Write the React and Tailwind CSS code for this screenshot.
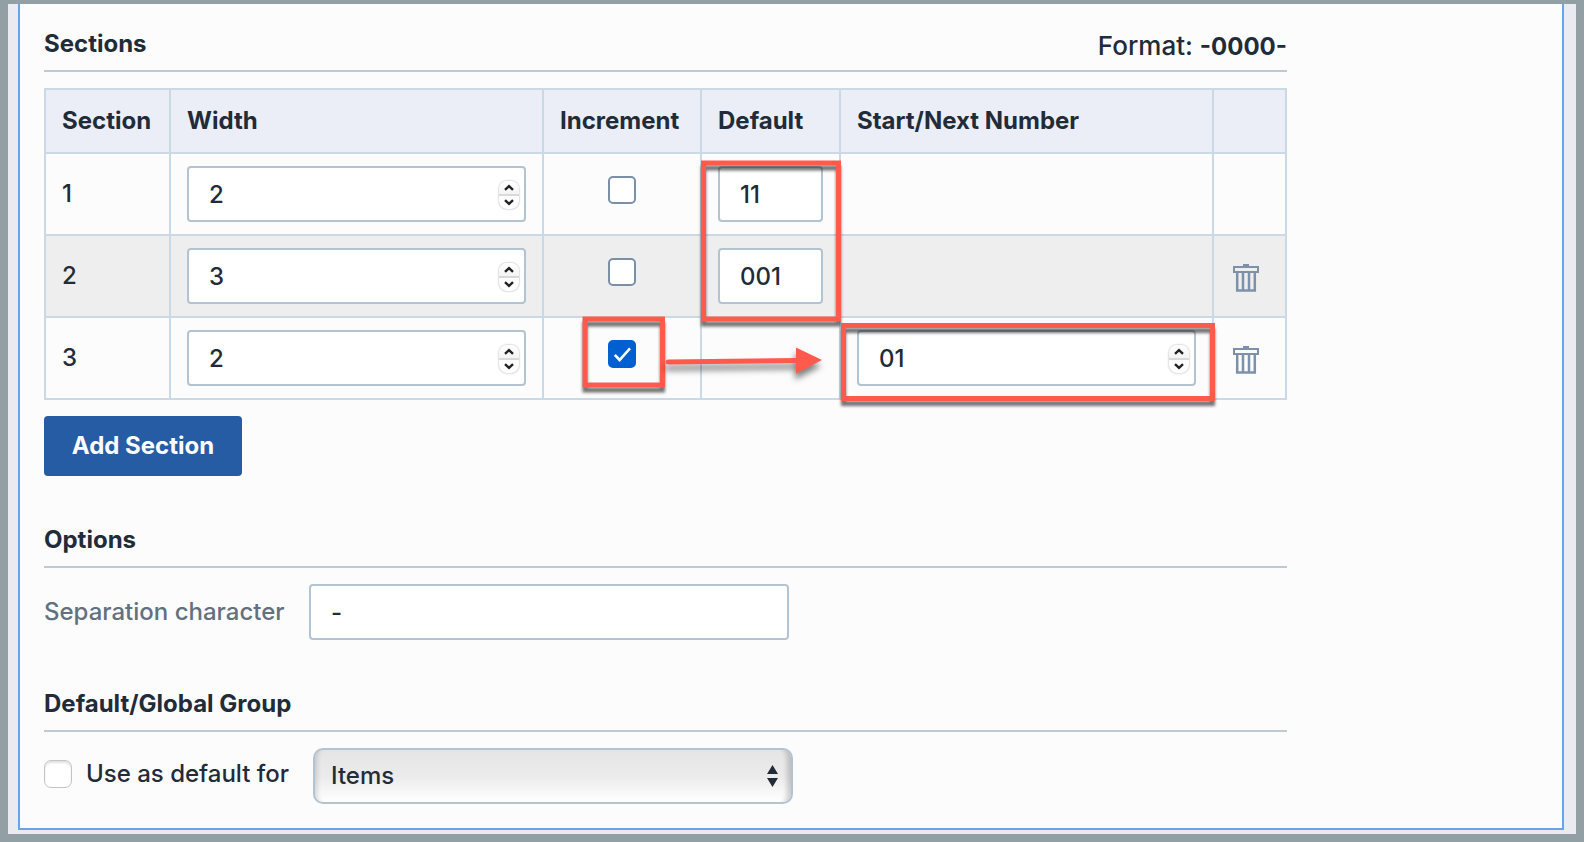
import { useRef, useState } from 'react';

const initialSections = [
    { id: 1, width: '2', increment: false, value: '11' },
    { id: 2, width: '3', increment: false, value: '001' },
    { id: 3, width: '2', increment: true, value: '01' },
];

const fieldClass =
    'h-14 w-full rounded border-2 border-[#b4c3d0] bg-white px-5 text-2xl font-medium text-[#222b38] outline-none';

function NumberField({ label, value }) {
    const ref = useRef(null);

    return (
        <div className="relative">
            <input
                ref={ref}
                type="number"
                aria-label={label}
                defaultValue={value}
                className={`${fieldClass} [appearance:textfield] [&::-webkit-inner-spin-button]:appearance-none`}
            />
            <div className="absolute right-[7px] top-[15px] flex h-7 w-5 flex-col overflow-hidden rounded-[8px] bg-white shadow-[0_0_2px_rgba(0,0,0,0.4)]">
                <button
                    type="button"
                    aria-label={`Increase ${label}`}
                    onClick={() => ref.current.stepUp()}
                    className="flex h-[15px] items-center justify-center border-b-2 border-[#d9d9d9] bg-linear-to-b from-white to-[#f4f4f4]"
                >
                    <svg width="10" height="7" viewBox="0 0 10 7" fill="none">
                        <path d="M1 5.8 L5 2.2 L9 5.8" stroke="#222" strokeWidth="2.4" />
                    </svg>
                </button>
                <button
                    type="button"
                    aria-label={`Decrease ${label}`}
                    onClick={() => ref.current.stepDown()}
                    className="flex h-[13px] items-center justify-center"
                >
                    <svg width="10" height="7" viewBox="0 0 10 7" fill="none">
                        <path d="M1 1.2 L5 4.8 L9 1.2" stroke="#222" strokeWidth="2.4" />
                    </svg>
                </button>
            </div>
        </div>
    );
}

function IncrementCheckbox({ label, checked, onChange }) {
    return (
        <div className="relative mx-auto mb-2 h-7 w-7">
            <input
                type="checkbox"
                aria-label={label}
                checked={checked}
                onChange={onChange}
                className="peer block h-7 w-7 appearance-none rounded-[5px] border-2 border-[#7b8fa8] bg-white checked:border-[#005fd1] checked:bg-[#005fd1]"
            />
            <svg
                className="pointer-events-none absolute inset-0 hidden peer-checked:block"
                width="28"
                height="28"
                viewBox="0 0 28 28"
                fill="none"
            >
                <path d="M6.8 14.8 L11.6 20 L22 8.4" stroke="#fff" strokeWidth="2.6" />
            </svg>
        </div>
    );
}

function TrashIcon() {
    return (
        <svg width="26" height="28" viewBox="0 0 26 28" fill="none" stroke="#7d91aa" strokeWidth="2">
            <path d="M10 1.5h6" strokeWidth="3" />
            <path d="M1 3h24v5H1z" />
            <path d="M4.2 8v18.6h17.6V8M10 8v18M16 8v18" strokeWidth="2.5" />
        </svg>
    );
}

function SectionHeading({ children, aside }) {
    return (
        <div className="mb-4 flex items-start justify-between border-b-2 border-[#bdcad6] pb-2.5">
            <h2 className="text-2xl font-bold">{children}</h2>
            {aside}
        </div>
    );
}

// red call-outs drawn over the table
function Callouts() {
    return (
        <svg
            className="pointer-events-none absolute left-0 top-0 overflow-visible"
            width="1243"
            height="312"
            viewBox="0 0 1243 312"
            fill="none"
        >
            <g
                stroke="#ff5a4b"
                strokeWidth="5"
                className="[filter:drop-shadow(0_5px_1.5px_rgba(0,0,0,0.55))]"
            >
                <rect x="659.5" y="75" width="135" height="156" />
                <rect x="541" y="231" width="77.5" height="66" />
                <rect x="799.5" y="237.5" width="369" height="73" />
            </g>
            <g className="[filter:drop-shadow(-1px_6px_3px_rgba(0,0,0,0.5))]">
                <path d="M624 274 L753 272.5" stroke="#ff5a4b" strokeWidth="5" strokeLinecap="round" />
                <path d="M752 259.5 L778 272 L752 285.5 Z" fill="#ff5a4b" />
            </g>
        </svg>
    );
}

function App() {
    const [sections, setSections] = useState(initialSections);

    const toggleIncrement = (id) => {
        setSections(sections.map((s) => (s.id === id ? { ...s, increment: !s.increment } : s)));
    };

    const removeSection = (id) => {
        setSections(sections.filter((s) => s.id !== id));
    };

    const addSection = () => {
        const nextId = Math.max(...sections.map((s) => s.id)) + 1;
        setSections([...sections, { id: nextId, width: '1', increment: false, value: '' }]);
    };

    return (
        <div className="min-h-screen border-8 border-t-4 border-[#929fa5] bg-[#e9ebf1] pb-1 pl-2.5 pr-3 font-[Inter,'Liberation_Sans',sans-serif] text-2xl font-medium text-[#222b38]">
            <main className="border-2 border-t-0 border-[#68a3ec] bg-[#fcfcfd] p-6">
                <div className="max-w-[1243px]">
                    <section>
                        <SectionHeading
                            aside={
                                <p className="-mb-1 pt-0.5 text-[26px] leading-8">
                                    Format: <strong className="text-2xl leading-8 font-bold">-0000-</strong>
                                </p>
                            }
                        >
                            Sections
                        </SectionHeading>
                        <div className="relative">
                            <table className="w-full table-fixed border-collapse text-left [&_td]:border-2 [&_td]:border-[#cbd9e4] [&_td]:px-4 [&_td]:py-3 [&_th]:border-2 [&_th]:border-[#cbd9e4] [&_th]:px-4 [&_th]:py-[15px]">
                                <colgroup>
                                    <col className="w-[125px]" />
                                    <col className="w-[373px]" />
                                    <col className="w-[158px]" />
                                    <col className="w-[139px]" />
                                    <col className="w-[373px]" />
                                    <col className="w-[73px]" />
                                </colgroup>
                                <thead className="bg-[#ebeef6]">
                                    <tr>
                                        <th>Section</th>
                                        <th>Width</th>
                                        <th>Increment</th>
                                        <th>Default</th>
                                        <th>Start/Next Number</th>
                                        <td></td>
                                    </tr>
                                </thead>
                                <tbody>
                                    {sections.map((section, index) => (
                                        <tr key={section.id} className="h-[82px] even:bg-[#eeeeee]">
                                            <td>{index + 1}</td>
                                            <td>
                                                <NumberField
                                                    label={`Width of section ${index + 1}`}
                                                    value={section.width}
                                                />
                                            </td>
                                            <td>
                                                <IncrementCheckbox
                                                    label={`Increment section ${index + 1}`}
                                                    checked={section.increment}
                                                    onChange={() => toggleIncrement(section.id)}
                                                />
                                            </td>
                                            <td>
                                                {!section.increment && (
                                                    <input
                                                        type="text"
                                                        aria-label={`Default of section ${index + 1}`}
                                                        defaultValue={section.value}
                                                        className={fieldClass}
                                                    />
                                                )}
                                            </td>
                                            <td>
                                                {section.increment && (
                                                    <NumberField
                                                        label={`Next number of section ${index + 1}`}
                                                        value={section.value}
                                                    />
                                                )}
                                            </td>
                                            <td>
                                                {index > 0 && (
                                                    <button
                                                        type="button"
                                                        aria-label={`Delete section ${index + 1}`}
                                                        onClick={() => removeSection(section.id)}
                                                        className="block px-[3px] pt-1"
                                                    >
                                                        <TrashIcon />
                                                    </button>
                                                )}
                                            </td>
                                        </tr>
                                    ))}
                                </tbody>
                            </table>
                            <Callouts />
                        </div>
                        <button
                            type="button"
                            onClick={addSection}
                            className="mt-4 block h-[60px] min-w-[198px] rounded bg-[#255ca4] px-6 font-bold text-white"
                        >
                            Add Section
                        </button>
                    </section>

                    <section className="mt-12">
                        <SectionHeading>Options</SectionHeading>
                        <div className="flex items-center">
                            <label htmlFor="separator" className="min-w-[265px] pr-5 text-[#62707f]">
                                Separation character
                            </label>
                            <div className="w-[480px]">
                                <input id="separator" type="text" defaultValue="-" className={fieldClass} />
                            </div>
                        </div>
                    </section>

                    <section className="mt-12">
                        <SectionHeading>Default/Global Group</SectionHeading>
                        <div className="flex items-center">
                            <div className="flex min-w-[269px] items-center gap-3.5 pb-1">
                                <input
                                    id="use-default"
                                    type="checkbox"
                                    className="h-7 w-7 appearance-none rounded-[7px] border border-[#c4c4c4] bg-white shadow-[inset_0_2px_2px_rgba(0,0,0,0.12)] checked:bg-[#005fd1]"
                                />
                                <label htmlFor="use-default">Use as default for</label>
                            </div>
                            <div className="relative w-[480px]">
                                <select
                                    aria-label="Default group"
                                    className="block h-14 w-full appearance-none rounded-[10px] border-2 border-[#b4c3d0] bg-linear-to-b from-[#e5e5e5] via-[#ebebeb] to-white px-4 shadow-[inset_8px_0_5px_-6px_rgba(0,0,0,0.15),inset_-10px_0_5px_-6px_rgba(0,0,0,0.18)] outline-none"
                                >
                                    <option>Items</option>
                                </select>
                                <svg
                                    className="pointer-events-none absolute right-[15px] top-[17px]"
                                    width="11"
                                    height="22"
                                    viewBox="0 0 11 22"
                                    fill="#222b38"
                                >
                                    <path d="M5.5 0 L11 9 H0 Z M0 13 H11 L5.5 22 Z" />
                                </svg>
                            </div>
                        </div>
                    </section>
                </div>
            </main>
        </div>
    );
}

export default App;
